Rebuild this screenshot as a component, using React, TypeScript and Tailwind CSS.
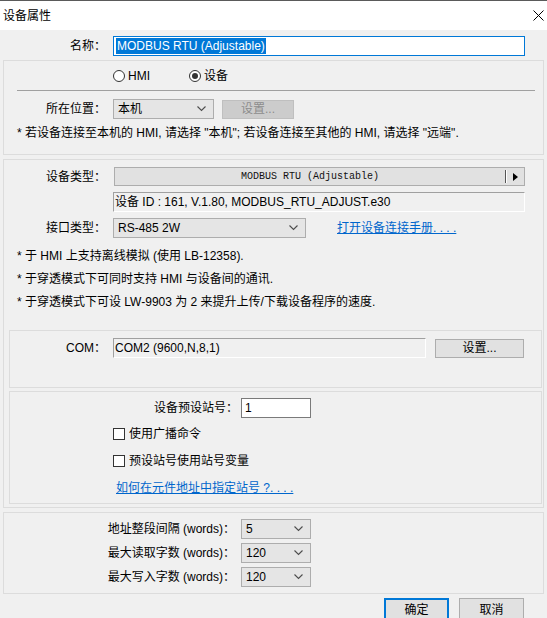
import React from "react";

const Chevron = () => (
  <svg width="9" height="6" viewBox="0 0 9 6" className="shrink-0">
    <polyline points="0.5,0.5 4.5,4.5 8.5,0.5" fill="none" stroke="#4d4d4d" strokeWidth="1.1" />
  </svg>
);

const Select = ({ w, value }: { w: string; value: string }) => (
  <div className={`${w} h-[20px] flex items-center justify-between border border-[#adadad] bg-[#e5e5e5] pl-[4px] pr-[7px]`}>
    <span>{value}</span>
    <Chevron />
  </div>
);

const Radio = ({ on }: { on?: boolean }) => (
  <span className="w-[12px] h-[12px] rounded-full border border-[#333] bg-white flex items-center justify-center">
    {on && <span className="w-[6px] h-[6px] rounded-full bg-[#333]" />}
  </span>
);

const Check = () => <span className="w-[12px] h-[12px] border border-[#333] bg-white shrink-0" />;

const Sunken = ({ w, children }: { w: string; children: React.ReactNode }) => (
  <div className={`${w} h-[20px] flex items-center border-t border-l border-[#a0a0a0] border-r-white border-b-white border-r border-b bg-[#f0f0f0] pl-[1px]`}>
    {children}
  </div>
);

export default function App() {
  return (
    <div className="w-[547px] h-[618px] overflow-hidden bg-[#f0f0f0] text-[12px] leading-[16px] text-black font-['Liberation_Sans','Noto_Sans_CJK_SC',sans-serif]">
      {/* title bar */}
      <div className="h-[30px] bg-white border-t border-[#5a5a5a] flex items-center justify-between pl-[3px] pr-[3px]">
        <span className="text-[12px]">设备属性</span>
        <svg width="11" height="11" viewBox="0 0 11 11">
          <path d="M0.5 0.5 L10.5 10.5 M10.5 0.5 L0.5 10.5" stroke="#000" strokeWidth="1" />
        </svg>
      </div>

      <div className="px-[3px]">
        {/* name */}
        <div className="mt-[6px] flex items-center h-[20px]">
          <span className="w-[110px] text-right pr-[7px]">名称：</span>
          <div className="w-[412px] h-[20px] border border-[#0078d7] bg-white flex items-center pl-[2px]">
            <span className="bg-[#0078d7] text-white px-[1px]">MODBUS RTU (Adjustable)</span>
          </div>
        </div>

        {/* group 1 */}
        <div className="mt-[4px] h-[95px] border border-[#dcdcdc]">
          <div className="mt-[7px] h-[16px] flex items-center pl-[109px]">
            <label className="w-[76px] flex items-center gap-[3px]">
              <Radio />
              <span>HMI</span>
            </label>
            <label className="flex items-center gap-[3px]">
              <Radio on />
              <span>设备</span>
            </label>
          </div>
          <div className="mt-[6px] ml-[13px] w-[518px] h-px bg-[#a0a0a0]" />
          <div className="mt-[8px] flex items-center">
            <span className="w-[109px] text-right pr-[7px]">所在位置：</span>
            <Select w="w-[101px]" value="本机" />
            <div className="ml-[8px] w-[72px] h-[19px] border border-[#bfbfbf] bg-[#cccccc] text-[#8d8d8d] flex items-center justify-center">
              设置...
            </div>
          </div>
          <div className="mt-[6px] pl-[13px]">
            * 若设备连接至本机的 HMI, 请选择 "本机"; 若设备连接至其他的 HMI, 请选择 "远端".
          </div>
        </div>

        {/* group 2 */}
        <div className="mt-[4px] h-[349px] border border-[#dcdcdc]">
          <div className="mt-[7px] flex items-center">
            <span className="w-[110px] text-right pr-[8px]">设备类型：</span>
            <div className="w-[411px] h-[19px] border border-[#adadad] bg-[#e1e1e1] flex items-center">
              <span className="flex-1 text-center text-[10px] text-[#111] font-['Liberation_Mono',monospace]">MODBUS RTU (Adjustable)</span>
              <span className="w-px h-[13px] bg-[#555] border-r border-white box-content" />
              <span className="w-[17px] flex items-center justify-center">
                <svg width="5" height="8" viewBox="0 0 5 8">
                  <polygon points="0,0 5,4 0,8" fill="#000" />
                </svg>
              </span>
            </div>
          </div>
          <div className="mt-[6px] ml-[109px]">
            <Sunken w="w-[412px]">设备 ID : 161, V.1.80, MODBUS_RTU_ADJUST.e30</Sunken>
          </div>
          <div className="mt-[6px] flex items-center">
            <span className="w-[109px] text-right pr-[7px]">接口类型：</span>
            <Select w="w-[193px]" value="RS-485 2W" />
            <a className="ml-[31px] text-[#0066cc] underline">打开设备连接手册. . . .</a>
          </div>
          <div className="mt-[10px] pl-[13px] flex flex-col gap-[7px]">
            <div>* 于 HMI 上支持离线模拟 (使用 LB-12358).</div>
            <div>* 于穿透模式下可同时支持 HMI 与设备间的通讯.</div>
            <div>* 于穿透模式下可设 LW-9903 为 2 来提升上传/下载设备程序的速度.</div>
          </div>

          {/* COM box */}
          <div className="mt-[20px] ml-[5px] w-[533px] h-[58px] border border-[#dcdcdc]">
            <div className="mt-[7px] flex items-center">
              <span className="w-[103px] text-right pr-[7px]">COM：</span>
              <Sunken w="w-[313px]">COM2 (9600,N,8,1)</Sunken>
              <div className="ml-[9px] w-[89px] h-[19px] border border-[#adadad] bg-[#e1e1e1] flex items-center justify-center">
                设置...
              </div>
            </div>
          </div>

          {/* station box */}
          <div className="mt-[3px] ml-[5px] w-[533px] h-[113px] border border-[#dcdcdc]">
            <div className="mt-[6px] flex items-center">
              <span className="w-[231px] text-right pr-[3px]">设备预设站号：</span>
              <div className="w-[70px] h-[20px] border border-[#7a7a7a] bg-white flex items-center pl-[3px]">1</div>
            </div>
            <label className="mt-[8px] h-[16px] pl-[103px] flex items-center gap-[4px]">
              <Check />
              <span>使用广播命令</span>
            </label>
            <label className="mt-[11px] h-[16px] pl-[103px] flex items-center gap-[4px]">
              <Check />
              <span>预设站号使用站号变量</span>
            </label>
            <div className="mt-[11px] pl-[106px]">
              <a className="text-[#0066cc] underline">如何在元件地址中指定站号 ?. . . .</a>
            </div>
          </div>
        </div>

        {/* group 3 */}
        <div className="mt-[4px] h-[82px] border border-[#dcdcdc] pt-[6px] flex flex-col gap-[4px]">
          {[
            ["地址整段间隔 (words)：", "5"],
            ["最大读取字数 (words)：", "120"],
            ["最大写入字数 (words)：", "120"],
          ].map(([label, v]) => (
            <div key={label} className="flex items-center">
              <span className="w-[237px] text-right pr-[6px]">{label}</span>
              <Select w="w-[70px]" value={v} />
            </div>
          ))}
        </div>

        {/* buttons */}
        <div className="mt-[4px] flex justify-end gap-[10px] pr-[20px]">
          <div className="w-[65px] h-[23px] border-2 border-[#0078d7] bg-[#e1e1e1] flex items-center justify-center">确定</div>
          <div className="w-[65px] h-[23px] border border-[#adadad] bg-[#e1e1e1] flex items-center justify-center">取消</div>
        </div>
      </div>
    </div>
  );
}
